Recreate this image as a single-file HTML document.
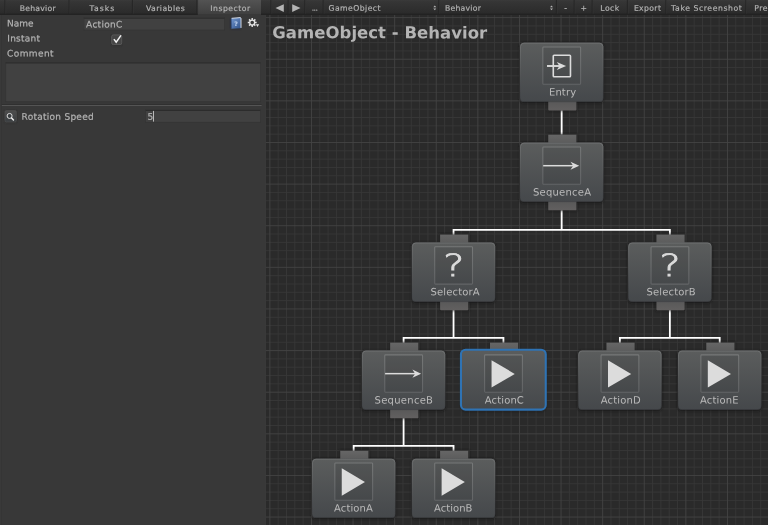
<!DOCTYPE html>
<html><head><meta charset="utf-8"><title>Behavior Designer</title>
<style>html,body{margin:0;padding:0;background:#383838;overflow:hidden}svg{display:block;will-change:transform}text{font-family:"DejaVu Sans","Liberation Sans",sans-serif;white-space:pre}</style>
</head><body>
<svg width="768" height="525" viewBox="0 0 768 525">
<defs>
<linearGradient id="gNode" x1="0" y1="0" x2="0" y2="1"><stop offset="0" stop-color="#5b5d5d"/><stop offset="1" stop-color="#45484b"/></linearGradient>
<linearGradient id="gBar" x1="0" y1="0" x2="0" y2="1"><stop offset="0" stop-color="#3a3a3a"/><stop offset="0.12" stop-color="#353535"/><stop offset="1" stop-color="#2a2a2a"/></linearGradient>
<linearGradient id="gTabSel" x1="0" y1="0" x2="0" y2="1"><stop offset="0" stop-color="#535353"/><stop offset="1" stop-color="#3f3f3f"/></linearGradient>
<linearGradient id="gConT" x1="0" y1="0" x2="0" y2="1"><stop offset="0" stop-color="#666666"/><stop offset="1" stop-color="#5a5a5a"/></linearGradient>
<linearGradient id="gConB" x1="0" y1="0" x2="0" y2="1"><stop offset="0" stop-color="#575757"/><stop offset="1" stop-color="#626060"/></linearGradient>
<linearGradient id="gRim" x1="0" y1="0" x2="0" y2="1"><stop offset="0" stop-color="#747676" stop-opacity="0.9"/><stop offset="0.55" stop-color="#686a6a" stop-opacity="0.35"/><stop offset="1" stop-color="#55585a" stop-opacity="0"/></linearGradient>
<linearGradient id="gFrame" x1="0" y1="0" x2="0" y2="1"><stop offset="0" stop-color="#767878"/><stop offset="1" stop-color="#626466"/></linearGradient>
<linearGradient id="gMag" x1="0" y1="0" x2="0" y2="1"><stop offset="0" stop-color="#4d4d4d"/><stop offset="1" stop-color="#3a3e41"/></linearGradient>
<linearGradient id="gBook" x1="0" y1="0" x2="1" y2="1"><stop offset="0" stop-color="#7499d0"/><stop offset="1" stop-color="#2f5088"/></linearGradient>
<filter id="sh" x="-10%" y="-10%" width="120%" height="130%"><feGaussianBlur stdDeviation="1.1"/></filter>
</defs>
<rect x="0" y="0" width="768" height="525" fill="#383838"/>
<rect x="0" y="14.5" width="0.9" height="511" fill="#3c3c3c"/><rect x="0.9" y="14.5" width="0.7" height="511" fill="#343434"/>
<rect x="265.8" y="14.5" width="502.2" height="510.5" fill="#2a2a2a"/>
<path d="M278.18 14.5V525M286.50 14.5V525M294.82 14.5V525M303.14 14.5V525M319.78 14.5V525M328.10 14.5V525M336.42 14.5V525M344.74 14.5V525M361.38 14.5V525M369.70 14.5V525M378.02 14.5V525M386.34 14.5V525M402.98 14.5V525M411.30 14.5V525M419.62 14.5V525M427.94 14.5V525M444.58 14.5V525M452.90 14.5V525M461.22 14.5V525M469.54 14.5V525M486.18 14.5V525M494.50 14.5V525M502.82 14.5V525M511.14 14.5V525M527.78 14.5V525M536.10 14.5V525M544.42 14.5V525M552.74 14.5V525M569.38 14.5V525M577.70 14.5V525M586.02 14.5V525M594.34 14.5V525M610.98 14.5V525M619.30 14.5V525M627.62 14.5V525M635.94 14.5V525M652.58 14.5V525M660.90 14.5V525M669.22 14.5V525M677.54 14.5V525M694.18 14.5V525M702.50 14.5V525M710.82 14.5V525M719.14 14.5V525M735.78 14.5V525M744.10 14.5V525M752.42 14.5V525M760.74 14.5V525M265.8 25.94H768M265.8 34.27H768M265.8 42.59H768M265.8 50.92H768M265.8 67.56H768M265.8 75.89H768M265.8 84.21H768M265.8 92.54H768M265.8 109.18H768M265.8 117.51H768M265.8 125.83H768M265.8 134.16H768M265.8 150.80H768M265.8 159.13H768M265.8 167.45H768M265.8 175.78H768M265.8 192.42H768M265.8 200.75H768M265.8 209.07H768M265.8 217.40H768M265.8 234.04H768M265.8 242.37H768M265.8 250.69H768M265.8 259.02H768M265.8 275.66H768M265.8 283.99H768M265.8 292.31H768M265.8 300.64H768M265.8 317.28H768M265.8 325.61H768M265.8 333.93H768M265.8 342.26H768M265.8 358.90H768M265.8 367.23H768M265.8 375.55H768M265.8 383.88H768M265.8 400.52H768M265.8 408.85H768M265.8 417.17H768M265.8 425.50H768M265.8 442.14H768M265.8 450.47H768M265.8 458.79H768M265.8 467.12H768M265.8 483.76H768M265.8 492.09H768M265.8 500.41H768M265.8 508.74H768M265.8 525.38H768" stroke="#383838" stroke-width="0.9" fill="none"/>
<path d="M269.86 14.5V525M311.46 14.5V525M353.06 14.5V525M394.66 14.5V525M436.26 14.5V525M477.86 14.5V525M519.46 14.5V525M561.06 14.5V525M602.66 14.5V525M644.26 14.5V525M685.86 14.5V525M727.46 14.5V525M265.8 17.62H768M265.8 59.24H768M265.8 100.86H768M265.8 142.48H768M265.8 184.10H768M265.8 225.72H768M265.8 267.34H768M265.8 308.96H768M265.8 350.58H768M265.8 392.20H768M265.8 433.82H768M265.8 475.44H768M265.8 517.06H768" stroke="#444444" stroke-width="0.9" fill="none"/>
<rect x="265.2" y="14.5" width="0.7" height="510.5" fill="#3d3d3d"/>
<text x="272.3" y="38.3" font-size="16.5" fill="#b4b4b4" textLength="214.9" lengthAdjust="spacing" font-weight="bold" transform="rotate(0.03 272.3 38.3)" >GameObject - Behavior</text>
<path d="M561.68 110.20000000000002V134.65" stroke="#ffffff" stroke-width="1.8" fill="none" stroke-linejoin="miter"/>
<path d="M561.68 210.15V229.85M453.55 235.55V229.85H669.88V235.55" stroke="#ffffff" stroke-width="1.8" fill="none" stroke-linejoin="miter"/>
<path d="M453.55 310.05V337.85M403.6 343.6V337.85H503.45V343.6" stroke="#ffffff" stroke-width="1.8" fill="none" stroke-linejoin="miter"/>
<path d="M669.88 310.05V337.85M619.9 343.6V337.85H719.72V343.6" stroke="#ffffff" stroke-width="1.8" fill="none" stroke-linejoin="miter"/>
<path d="M403.6 418.1V445.95M353.68 451.75V445.95H453.55V451.75" stroke="#ffffff" stroke-width="1.8" fill="none" stroke-linejoin="miter"/>
<rect x="547.38" y="100.80000000000001" width="30" height="10.5" fill="#1c1c1c" opacity="0.55" filter="url(#sh)"/>
<rect x="519.23" y="42.2" width="84.89999999999999" height="61.1" rx="4.5" fill="#161616" opacity="0.6" filter="url(#sh)"/>
<rect x="548.2299999999999" y="99.80000000000001" width="28.2" height="10.6" rx="0.9" fill="url(#gConB)"/>
<rect x="520.03" y="42.7" width="83.3" height="59.1" rx="3.9" fill="url(#gNode)" stroke="#303234" stroke-opacity="0.45" stroke-width="0.6"/>
<rect x="520.48" y="43.150000000000006" width="82.39999999999999" height="58.2" rx="3.5" fill="none" stroke="url(#gRim)" stroke-width="0.9"/>
<rect x="542.8299999999999" y="46.95" width="37.8" height="37.3" rx="0.8" fill="#000000" fill-opacity="0.07" stroke="url(#gFrame)" stroke-width="1.05"/>
<rect x="553.28" y="55.199999999999996" width="17.2" height="21.6" rx="0.8" fill="none" stroke="#dcdcdc" stroke-width="1.6"/>
<path d="M546.9799999999999 66.0H561.68" stroke="#dcdcdc" stroke-width="1.9" fill="none"/>
<path d="M566.0799999999999 66.0L556.78 61.89999999999999L559.4799999999999 66.0L556.78 70.1Z" fill="#dcdcdc"/>
<text x="562.58" y="95.5" font-size="10" fill="#bababa" text-anchor="middle" transform="rotate(0.03 562.58 95.5)" letter-spacing="0.14">Entry</text>
<rect x="547.38" y="133.65" width="30" height="10" fill="#1c1c1c" opacity="0.55" filter="url(#sh)"/>
<rect x="547.38" y="200.75" width="30" height="10.5" fill="#1c1c1c" opacity="0.55" filter="url(#sh)"/>
<rect x="519.23" y="142.15" width="84.89999999999999" height="61.1" rx="4.5" fill="#161616" opacity="0.6" filter="url(#sh)"/>
<rect x="548.2299999999999" y="134.65" width="28.2" height="10" fill="url(#gConT)"/>
<rect x="548.2299999999999" y="199.75" width="28.2" height="10.6" rx="0.9" fill="url(#gConB)"/>
<rect x="520.03" y="142.65" width="83.3" height="59.1" rx="3.9" fill="url(#gNode)" stroke="#303234" stroke-opacity="0.45" stroke-width="0.6"/>
<rect x="520.48" y="143.1" width="82.39999999999999" height="58.2" rx="3.5" fill="none" stroke="url(#gRim)" stroke-width="0.9"/>
<rect x="542.8299999999999" y="146.9" width="37.8" height="37.3" rx="0.8" fill="#000000" fill-opacity="0.07" stroke="url(#gFrame)" stroke-width="1.05"/>
<path d="M543.18 165.70000000000002H573.68" stroke="#dcdcdc" stroke-width="1.5" fill="none"/>
<path d="M579.18 165.75L570.4799999999999 161.65L573.18 165.75L570.4799999999999 169.85000000000002Z" fill="#dcdcdc"/>
<text x="562.14" y="195.45" font-size="10" fill="#bababa" text-anchor="middle" transform="rotate(0.03 562.14 195.45)" letter-spacing="0.24">SequenceA</text>
<rect x="439.25" y="233.55" width="30" height="10" fill="#1c1c1c" opacity="0.55" filter="url(#sh)"/>
<rect x="439.25" y="300.65000000000003" width="30" height="10.5" fill="#1c1c1c" opacity="0.55" filter="url(#sh)"/>
<rect x="411.1" y="242.05" width="84.89999999999999" height="61.1" rx="4.5" fill="#161616" opacity="0.6" filter="url(#sh)"/>
<rect x="440.1" y="234.55" width="28.2" height="10" fill="url(#gConT)"/>
<rect x="440.1" y="299.65000000000003" width="28.2" height="10.6" rx="0.9" fill="url(#gConB)"/>
<rect x="411.90000000000003" y="242.55" width="83.3" height="59.1" rx="3.9" fill="url(#gNode)" stroke="#303234" stroke-opacity="0.45" stroke-width="0.6"/>
<rect x="412.35" y="243.0" width="82.39999999999999" height="58.2" rx="3.5" fill="none" stroke="url(#gRim)" stroke-width="0.9"/>
<rect x="434.7" y="246.8" width="37.8" height="37.3" rx="0.8" fill="#000000" fill-opacity="0.07" stroke="url(#gFrame)" stroke-width="1.05"/>
<text x="0" y="0" font-size="30.6" font-weight="200" fill="#dcdcdc" stroke="#dcdcdc" stroke-width="0.8" text-anchor="middle" transform="translate(453.8 276.35) scale(1.3 1) rotate(0.03)" font-family="DejaVu Sans Light, DejaVu Sans, Liberation Sans, sans-serif">?</text>
<text x="455.2" y="295.35" font-size="10" fill="#bababa" text-anchor="middle" transform="rotate(0.03 455.2 295.35)" letter-spacing="0.14">SelectorA</text>
<rect x="655.58" y="233.55" width="30" height="10" fill="#1c1c1c" opacity="0.55" filter="url(#sh)"/>
<rect x="655.58" y="300.65000000000003" width="30" height="10.5" fill="#1c1c1c" opacity="0.55" filter="url(#sh)"/>
<rect x="627.4300000000001" y="242.05" width="84.89999999999999" height="61.1" rx="4.5" fill="#161616" opacity="0.6" filter="url(#sh)"/>
<rect x="656.43" y="234.55" width="28.2" height="10" fill="url(#gConT)"/>
<rect x="656.43" y="299.65000000000003" width="28.2" height="10.6" rx="0.9" fill="url(#gConB)"/>
<rect x="628.23" y="242.55" width="83.3" height="59.1" rx="3.9" fill="url(#gNode)" stroke="#303234" stroke-opacity="0.45" stroke-width="0.6"/>
<rect x="628.6800000000001" y="243.0" width="82.39999999999999" height="58.2" rx="3.5" fill="none" stroke="url(#gRim)" stroke-width="0.9"/>
<rect x="651.03" y="246.8" width="37.8" height="37.3" rx="0.8" fill="#000000" fill-opacity="0.07" stroke="url(#gFrame)" stroke-width="1.05"/>
<text x="0" y="0" font-size="30.6" font-weight="200" fill="#dcdcdc" stroke="#dcdcdc" stroke-width="0.8" text-anchor="middle" transform="translate(670.13 276.35) scale(1.3 1) rotate(0.03)" font-family="DejaVu Sans Light, DejaVu Sans, Liberation Sans, sans-serif">?</text>
<text x="671.13" y="295.35" font-size="10" fill="#bababa" text-anchor="middle" transform="rotate(0.03 671.13 295.35)" letter-spacing="0.14">SelectorB</text>
<rect x="389.3" y="341.6" width="30" height="10" fill="#1c1c1c" opacity="0.55" filter="url(#sh)"/>
<rect x="389.3" y="408.70000000000005" width="30" height="10.5" fill="#1c1c1c" opacity="0.55" filter="url(#sh)"/>
<rect x="361.15000000000003" y="350.1" width="84.89999999999999" height="61.1" rx="4.5" fill="#161616" opacity="0.6" filter="url(#sh)"/>
<rect x="390.15000000000003" y="342.6" width="28.2" height="10" fill="url(#gConT)"/>
<rect x="390.15000000000003" y="407.70000000000005" width="28.2" height="10.6" rx="0.9" fill="url(#gConB)"/>
<rect x="361.95000000000005" y="350.6" width="83.3" height="59.1" rx="3.9" fill="url(#gNode)" stroke="#303234" stroke-opacity="0.45" stroke-width="0.6"/>
<rect x="362.40000000000003" y="351.05" width="82.39999999999999" height="58.2" rx="3.5" fill="none" stroke="url(#gRim)" stroke-width="0.9"/>
<rect x="384.75" y="354.85" width="37.8" height="37.3" rx="0.8" fill="#000000" fill-opacity="0.07" stroke="url(#gFrame)" stroke-width="1.05"/>
<path d="M385.1 373.65000000000003H415.6" stroke="#dcdcdc" stroke-width="1.5" fill="none"/>
<path d="M421.1 373.70000000000005L412.40000000000003 369.6000000000001L415.1 373.70000000000005L412.40000000000003 377.80000000000007Z" fill="#dcdcdc"/>
<text x="403.9" y="403.40000000000003" font-size="10" fill="#bababa" text-anchor="middle" transform="rotate(0.03 403.9 403.40000000000003)" letter-spacing="0.28">SequenceB</text>
<rect x="489.15" y="341.6" width="30" height="10" fill="#1c1c1c" opacity="0.55" filter="url(#sh)"/>
<rect x="461.0" y="350.1" width="84.89999999999999" height="61.1" rx="4.5" fill="#161616" opacity="0.6" filter="url(#sh)"/>
<rect x="490.0" y="342.6" width="28.2" height="10" fill="url(#gConT)"/>
<rect x="460.95" y="349.75" width="84.8" height="59.85" rx="4.6" fill="url(#gNode)" stroke="#2f73b4" stroke-width="2.1"/>
<rect x="484.59999999999997" y="354.85" width="37.8" height="37.3" rx="0.8" fill="#000000" fill-opacity="0.07" stroke="url(#gFrame)" stroke-width="1.05"/>
<path d="M491.55 360.20000000000005L514.75 373.90000000000003L491.55 387.6000000000001Z" fill="#dcdcdc"/>
<text x="504.35" y="403.40000000000003" font-size="10" fill="#bababa" text-anchor="middle" transform="rotate(0.03 504.35 403.40000000000003)" letter-spacing="0.14">ActionC</text>
<rect x="605.6" y="341.6" width="30" height="10" fill="#1c1c1c" opacity="0.55" filter="url(#sh)"/>
<rect x="577.45" y="350.1" width="84.89999999999999" height="61.1" rx="4.5" fill="#161616" opacity="0.6" filter="url(#sh)"/>
<rect x="606.4499999999999" y="342.6" width="28.2" height="10" fill="url(#gConT)"/>
<rect x="578.25" y="350.6" width="83.3" height="59.1" rx="3.9" fill="url(#gNode)" stroke="#303234" stroke-opacity="0.45" stroke-width="0.6"/>
<rect x="578.7" y="351.05" width="82.39999999999999" height="58.2" rx="3.5" fill="none" stroke="url(#gRim)" stroke-width="0.9"/>
<rect x="601.05" y="354.85" width="37.8" height="37.3" rx="0.8" fill="#000000" fill-opacity="0.07" stroke="url(#gFrame)" stroke-width="1.05"/>
<path d="M608.0 360.20000000000005L631.1999999999999 373.90000000000003L608.0 387.6000000000001Z" fill="#dcdcdc"/>
<text x="620.8" y="403.40000000000003" font-size="10" fill="#bababa" text-anchor="middle" transform="rotate(0.03 620.8 403.40000000000003)" letter-spacing="0.14">ActionD</text>
<rect x="705.4200000000001" y="341.6" width="30" height="10" fill="#1c1c1c" opacity="0.55" filter="url(#sh)"/>
<rect x="677.2700000000001" y="350.1" width="84.89999999999999" height="61.1" rx="4.5" fill="#161616" opacity="0.6" filter="url(#sh)"/>
<rect x="706.27" y="342.6" width="28.2" height="10" fill="url(#gConT)"/>
<rect x="678.07" y="350.6" width="83.3" height="59.1" rx="3.9" fill="url(#gNode)" stroke="#303234" stroke-opacity="0.45" stroke-width="0.6"/>
<rect x="678.5200000000001" y="351.05" width="82.39999999999999" height="58.2" rx="3.5" fill="none" stroke="url(#gRim)" stroke-width="0.9"/>
<rect x="700.87" y="354.85" width="37.8" height="37.3" rx="0.8" fill="#000000" fill-opacity="0.07" stroke="url(#gFrame)" stroke-width="1.05"/>
<path d="M707.82 360.20000000000005L731.02 373.90000000000003L707.82 387.6000000000001Z" fill="#dcdcdc"/>
<text x="719.37" y="403.40000000000003" font-size="10" fill="#bababa" text-anchor="middle" transform="rotate(0.03 719.37 403.40000000000003)" letter-spacing="0.14">ActionE</text>
<rect x="339.38" y="449.75" width="30" height="10" fill="#1c1c1c" opacity="0.55" filter="url(#sh)"/>
<rect x="311.23" y="458.25" width="84.89999999999999" height="61.1" rx="4.5" fill="#161616" opacity="0.6" filter="url(#sh)"/>
<rect x="340.23" y="450.75" width="28.2" height="10" fill="url(#gConT)"/>
<rect x="312.03000000000003" y="458.75" width="83.3" height="59.1" rx="3.9" fill="url(#gNode)" stroke="#303234" stroke-opacity="0.45" stroke-width="0.6"/>
<rect x="312.48" y="459.2" width="82.39999999999999" height="58.2" rx="3.5" fill="none" stroke="url(#gRim)" stroke-width="0.9"/>
<rect x="334.83" y="463.0" width="37.8" height="37.3" rx="0.8" fill="#000000" fill-opacity="0.07" stroke="url(#gFrame)" stroke-width="1.05"/>
<path d="M341.78000000000003 468.35L364.98 482.05L341.78000000000003 495.75000000000006Z" fill="#dcdcdc"/>
<text x="353.52" y="511.55" font-size="10" fill="#bababa" text-anchor="middle" transform="rotate(0.03 353.52 511.55)" letter-spacing="0.1">ActionA</text>
<rect x="439.25" y="449.75" width="30" height="10" fill="#1c1c1c" opacity="0.55" filter="url(#sh)"/>
<rect x="411.1" y="458.25" width="84.89999999999999" height="61.1" rx="4.5" fill="#161616" opacity="0.6" filter="url(#sh)"/>
<rect x="440.1" y="450.75" width="28.2" height="10" fill="url(#gConT)"/>
<rect x="411.90000000000003" y="458.75" width="83.3" height="59.1" rx="3.9" fill="url(#gNode)" stroke="#303234" stroke-opacity="0.45" stroke-width="0.6"/>
<rect x="412.35" y="459.2" width="82.39999999999999" height="58.2" rx="3.5" fill="none" stroke="url(#gRim)" stroke-width="0.9"/>
<rect x="434.7" y="463.0" width="37.8" height="37.3" rx="0.8" fill="#000000" fill-opacity="0.07" stroke="url(#gFrame)" stroke-width="1.05"/>
<path d="M441.65000000000003 468.35L464.85 482.05L441.65000000000003 495.75000000000006Z" fill="#dcdcdc"/>
<text x="453.2" y="511.55" font-size="10" fill="#bababa" text-anchor="middle" transform="rotate(0.03 453.2 511.55)" letter-spacing="0.04">ActionB</text>
<rect x="261" y="0" width="507" height="14.5" fill="url(#gBar)"/>
<rect x="261" y="13.7" width="507" height="1" fill="#1f1f1f"/>
<rect x="270.5" y="0" width="0.9" height="13.8" fill="#232323"/><rect x="271.40000000000003" y="0" width="0.8" height="13.8" fill="#3b3b3b" opacity="0.55"/>
<rect x="287.7" y="0" width="0.9" height="13.8" fill="#232323"/><rect x="288.6" y="0" width="0.8" height="13.8" fill="#3b3b3b" opacity="0.55"/>
<rect x="304.4" y="0" width="0.9" height="13.8" fill="#232323"/><rect x="305.3" y="0" width="0.8" height="13.8" fill="#3b3b3b" opacity="0.55"/>
<rect x="322.7" y="0" width="0.9" height="13.8" fill="#232323"/><rect x="323.6" y="0" width="0.8" height="13.8" fill="#3b3b3b" opacity="0.55"/>
<rect x="438.4" y="0" width="0.9" height="13.8" fill="#232323"/><rect x="439.3" y="0" width="0.8" height="13.8" fill="#3b3b3b" opacity="0.55"/>
<rect x="555.9000000000001" y="0" width="0.9" height="13.8" fill="#232323"/><rect x="556.8000000000001" y="0" width="0.8" height="13.8" fill="#3b3b3b" opacity="0.55"/>
<rect x="573.7" y="0" width="0.9" height="13.8" fill="#232323"/><rect x="574.6" y="0" width="0.8" height="13.8" fill="#3b3b3b" opacity="0.55"/>
<rect x="591.7" y="0" width="0.9" height="13.8" fill="#232323"/><rect x="592.6" y="0" width="0.8" height="13.8" fill="#3b3b3b" opacity="0.55"/>
<rect x="626.9000000000001" y="0" width="0.9" height="13.8" fill="#232323"/><rect x="627.8000000000001" y="0" width="0.8" height="13.8" fill="#3b3b3b" opacity="0.55"/>
<rect x="665.45" y="0" width="0.9" height="13.8" fill="#232323"/><rect x="666.35" y="0" width="0.8" height="13.8" fill="#3b3b3b" opacity="0.55"/>
<rect x="745.4000000000001" y="0" width="0.9" height="13.8" fill="#232323"/><rect x="746.3000000000001" y="0" width="0.8" height="13.8" fill="#3b3b3b" opacity="0.55"/>
<path d="M275.5 8.1L283.8 4.2V12Z" fill="#b4b4b4"/>
<path d="M300.5 8.1L292.2 4.2V12Z" fill="#b4b4b4"/>
<text x="311.7" y="10.8" font-size="7.7" fill="#b4b4b4" stroke="#b4b4b4" stroke-width="0.18" textLength="6.3" lengthAdjust="spacing" transform="rotate(0.03 311.7 10.8)" >...</text>
<text x="328.5" y="10.8" font-size="7.7" fill="#b4b4b4" stroke="#b4b4b4" stroke-width="0.18" textLength="52" lengthAdjust="spacing" transform="rotate(0.03 328.5 10.8)" >GameObject</text>
<path d="M433.3 7.2L434.8 5.4L436.3 7.2ZM433.3 8.4L434.8 10.2L436.3 8.4Z" fill="#b4b4b4"/>
<text x="445" y="10.8" font-size="7.7" fill="#b4b4b4" stroke="#b4b4b4" stroke-width="0.18" textLength="35.8" lengthAdjust="spacing" transform="rotate(0.03 445 10.8)" >Behavior</text>
<path d="M550 7.2L551.5 5.4L553 7.2ZM550 8.4L551.5 10.2L553 8.4Z" fill="#b4b4b4"/>
<text x="564.2" y="10.8" font-size="7.7" fill="#b4b4b4" stroke="#b4b4b4" stroke-width="0.18" transform="rotate(0.03 564.2 10.8)" >-</text>
<text x="580.6" y="10.8" font-size="7.7" fill="#b4b4b4" stroke="#b4b4b4" stroke-width="0.18" transform="rotate(0.03 580.6 10.8)" >+</text>
<text x="600.3" y="10.8" font-size="7.7" fill="#b4b4b4" stroke="#b4b4b4" stroke-width="0.18" textLength="18.9" lengthAdjust="spacing" transform="rotate(0.03 600.3 10.8)" >Lock</text>
<text x="633.9" y="10.8" font-size="7.7" fill="#b4b4b4" stroke="#b4b4b4" stroke-width="0.18" textLength="27" lengthAdjust="spacing" transform="rotate(0.03 633.9 10.8)" >Export</text>
<text x="671.1" y="10.8" font-size="7.7" fill="#b4b4b4" stroke="#b4b4b4" stroke-width="0.18" textLength="70.7" lengthAdjust="spacing" transform="rotate(0.03 671.1 10.8)" >Take Screenshot</text>
<text x="754.3" y="10.8" font-size="7.7" fill="#b4b4b4" stroke="#b4b4b4" stroke-width="0.18" transform="rotate(0.03 754.3 10.8)" letter-spacing="0.45">Pre</text>
<rect x="0" y="0" width="261" height="14.5" fill="url(#gBar)"/>
<rect x="197.8" y="0" width="63.2" height="14.5" fill="url(#gTabSel)"/>
<rect x="0" y="13.7" width="197.8" height="1" fill="#1f1f1f"/>
<rect x="4.5" y="0" width="0.9" height="13.8" fill="#232323"/><rect x="5.3999999999999995" y="0" width="0.8" height="13.8" fill="#3b3b3b" opacity="0.55"/>
<rect x="68.60000000000001" y="0" width="0.9" height="13.8" fill="#232323"/><rect x="69.5" y="0" width="0.8" height="13.8" fill="#3b3b3b" opacity="0.55"/>
<rect x="131.89999999999998" y="0" width="0.9" height="13.8" fill="#232323"/><rect x="132.79999999999998" y="0" width="0.8" height="13.8" fill="#3b3b3b" opacity="0.55"/>
<rect x="196.5" y="0" width="0.9" height="13.8" fill="#232323"/><rect x="197.4" y="0" width="0.8" height="13.8" fill="#3b3b3b" opacity="0.55"/>
<text x="19.75" y="10.9" font-size="7.7" fill="#b4b4b4" stroke="#b4b4b4" stroke-width="0.18" textLength="35.85" lengthAdjust="spacing" transform="rotate(0.03 19.75 10.9)" >Behavior</text>
<text x="89.6" y="10.9" font-size="7.7" fill="#b4b4b4" stroke="#b4b4b4" stroke-width="0.18" textLength="24.6" lengthAdjust="spacing" transform="rotate(0.03 89.6 10.9)" >Tasks</text>
<text x="146" y="10.9" font-size="7.7" fill="#b4b4b4" stroke="#b4b4b4" stroke-width="0.18" textLength="38.7" lengthAdjust="spacing" transform="rotate(0.03 146 10.9)" >Variables</text>
<text x="210.25" y="10.9" font-size="7.7" fill="#b4b4b4" stroke="#b4b4b4" stroke-width="0.18" textLength="40" lengthAdjust="spacing" transform="rotate(0.03 210.25 10.9)" >Inspector</text>
<text x="6.9" y="26.6" font-size="9" fill="#b4b4b4" stroke="#b4b4b4" stroke-width="0.2" textLength="26.6" lengthAdjust="spacing" transform="rotate(0.03 6.9 26.6)" >Name</text>
<text x="7.25" y="41.6" font-size="9" fill="#b4b4b4" stroke="#b4b4b4" stroke-width="0.2" textLength="32.75" lengthAdjust="spacing" transform="rotate(0.03 7.25 41.6)" >Instant</text>
<text x="7.1" y="56.6" font-size="9" fill="#b4b4b4" stroke="#b4b4b4" stroke-width="0.2" textLength="46.4" lengthAdjust="spacing" transform="rotate(0.03 7.1 56.6)" >Comment</text>
<rect x="83.5" y="17.5" width="141.5" height="12.7" fill="#414141"/>
<rect x="83.5" y="17.5" width="141.5" height="1.2" fill="#2c2c2c"/>
<rect x="83.5" y="17.5" width="0.8" height="12.7" fill="#343434"/>
<rect x="224.2" y="17.5" width="0.8" height="12.7" fill="#343434"/>
<rect x="83.5" y="29.7" width="141.5" height="0.7" fill="#323232"/>
<text x="86.1" y="27.5" font-size="9" fill="#b4b4b4" stroke="#b4b4b4" stroke-width="0.2" textLength="36.2" lengthAdjust="spacing" transform="rotate(0.03 86.1 27.5)" >ActionC</text>
<rect x="111.3" y="35.2" width="10.6" height="10.2" rx="1.8" fill="#262626" opacity="0.8" filter="url(#sh)"/>
<rect x="111.7" y="34.9" width="10.1" height="9.7" rx="1.7" fill="#454545" stroke="#5e5e5e" stroke-width="0.9"/>
<path d="M113.9 39.1L116.2 42.2L121 35.4" stroke="#f2f2f2" stroke-width="1.5" fill="none"/>
<rect x="230.9" y="18.1" width="10" height="11" rx="1" fill="#1c2433" opacity="0.6" filter="url(#sh)"/>
<path d="M231 18.6L239.9 17.7L240.9 18.2V28.2L231.3 28.7Z" fill="url(#gBook)"/>
<path d="M231.6 18.3L240.2 17.6L241 18.1V27.9" stroke="#e9eef6" stroke-width="0.9" fill="none"/>
<path d="M231.2 18.6V28.6" stroke="#2b4472" stroke-width="0.8" fill="none"/>
<text x="236" y="25.9" font-size="6.2" fill="#b7cbe9" stroke="#b7cbe9" stroke-width="0.18" font-weight="bold" text-anchor="middle" transform="rotate(0.03 236 25.9)" >?</text>
<g transform="translate(252.2 22.5)"><circle r="2.45" fill="none" stroke="#e6e6e6" stroke-width="1.35"/><rect x="-0.75" y="-4.45" width="1.5" height="1.9" fill="#e6e6e6" transform="rotate(0)"/><rect x="-0.75" y="-4.45" width="1.5" height="1.9" fill="#e6e6e6" transform="rotate(45)"/><rect x="-0.75" y="-4.45" width="1.5" height="1.9" fill="#e6e6e6" transform="rotate(90)"/><rect x="-0.75" y="-4.45" width="1.5" height="1.9" fill="#e6e6e6" transform="rotate(135)"/><rect x="-0.75" y="-4.45" width="1.5" height="1.9" fill="#e6e6e6" transform="rotate(180)"/><rect x="-0.75" y="-4.45" width="1.5" height="1.9" fill="#e6e6e6" transform="rotate(225)"/><rect x="-0.75" y="-4.45" width="1.5" height="1.9" fill="#e6e6e6" transform="rotate(270)"/><rect x="-0.75" y="-4.45" width="1.5" height="1.9" fill="#e6e6e6" transform="rotate(315)"/></g>
<path d="M255.9 24.2H259.1L257.5 27.1Z" fill="#e6e6e6"/>
<rect x="5.3" y="62.3" width="255.6" height="39.6" fill="#414141"/>
<rect x="5.3" y="62.3" width="255.6" height="1.2" fill="#2c2c2c"/>
<rect x="5.3" y="62.3" width="0.8" height="39.6" fill="#343434"/>
<rect x="260.09999999999997" y="62.3" width="0.8" height="39.6" fill="#343434"/>
<rect x="5.3" y="101.4" width="255.6" height="0.7" fill="#323232"/>
<rect x="1.8" y="104.2" width="259.8" height="0.9" fill="#2e2e2e"/>
<rect x="1.8" y="105.1" width="259.8" height="0.9" fill="#585858"/>
<rect x="4.6" y="110.5" width="12.1" height="12" rx="1.8" fill="#2a2a2a" opacity="0.7" filter="url(#sh)"/>
<rect x="4.9" y="110.6" width="11.5" height="11.4" rx="1.5" fill="url(#gMag)" stroke="#525252" stroke-width="0.6"/>
<circle cx="9.6" cy="115.95" r="2.5" fill="#3a3e41" stroke="#dcdcdc" stroke-width="1.0"/>
<path d="M11.6 118L13.45 120.0" stroke="#ececec" stroke-width="1.5" stroke-linecap="round" fill="none"/>
<text x="21.6" y="119.8" font-size="9" fill="#b4b4b4" stroke="#b4b4b4" stroke-width="0.2" textLength="72.1" lengthAdjust="spacing" transform="rotate(0.03 21.6 119.8)" >Rotation Speed</text>
<rect x="145.1" y="109.8" width="115.8" height="12.6" fill="#414141"/>
<rect x="145.1" y="109.8" width="115.8" height="1.2" fill="#2c2c2c"/>
<rect x="145.1" y="109.8" width="0.8" height="12.6" fill="#343434"/>
<rect x="260.09999999999997" y="109.8" width="0.8" height="12.6" fill="#343434"/>
<rect x="145.1" y="121.89999999999999" width="115.8" height="0.7" fill="#323232"/>
<text x="147.4" y="119.8" font-size="9" fill="#b4b4b4" stroke="#b4b4b4" stroke-width="0.2" transform="rotate(0.03 147.4 119.8)" >5</text>
<rect x="153.1" y="110.9" width="0.9" height="10.7" fill="#c8c8c8"/>
</svg>
</body></html>
